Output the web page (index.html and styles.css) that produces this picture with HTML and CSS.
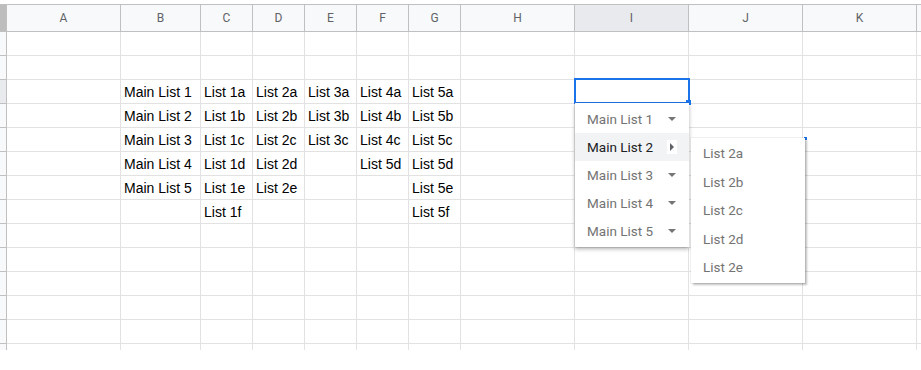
FILE: index.html
```html
<!DOCTYPE html>
<html lang="en">
<head>
  <meta charset="UTF-8" />
  <title>Dependent dropdown</title>
  <link rel="stylesheet" href="styles.css">
</head>
<body>
  <div class="sheet">
    <div class="grid" id="grid"></div>

    <div class="selection"></div>
    <div class="handle"></div>
    <div class="dot"></div>

    <div class="menu">
      <div class="menu-item">Main List 1 <span class="caret-down"></span></div>
      <div class="menu-item active">Main List 2 <span class="caret-box"><span class="caret-right"></span></span></div>
      <div class="menu-item">Main List 3 <span class="caret-down"></span></div>
      <div class="menu-item">Main List 4 <span class="caret-down"></span></div>
      <div class="menu-item">Main List 5 <span class="caret-down"></span></div>
    </div>

    <div class="submenu">
      <div class="sub-item">List 2a</div>
      <div class="sub-item">List 2b</div>
      <div class="sub-item">List 2c</div>
      <div class="sub-item">List 2d</div>
      <div class="sub-item">List 2e</div>
    </div>
  </div>

  <script>
    const grid = document.getElementById('grid');
    const letters = ['A', 'B', 'C', 'D', 'E', 'F', 'G', 'H', 'I', 'J', 'K', ''];
    const totalRows = 14;
    const activeRow = 3;

    // row number -> values for columns A..G
    const data = {
      3: ['', 'Main List 1', 'List 1a', 'List 2a', 'List 3a', 'List 4a', 'List 5a'],
      4: ['', 'Main List 2', 'List 1b', 'List 2b', 'List 3b', 'List 4b', 'List 5b'],
      5: ['', 'Main List 3', 'List 1c', 'List 2c', 'List 3c', 'List 4c', 'List 5c'],
      6: ['', 'Main List 4', 'List 1d', 'List 2d', '', 'List 5d', 'List 5d'],
      7: ['', 'Main List 5', 'List 1e', 'List 2e', '', '', 'List 5e'],
      8: ['', '', 'List 1f', '', '', '', 'List 5f']
    };

    function addCell(cls, text) {
      const el = document.createElement('div');
      el.className = cls;
      el.textContent = text || '';
      grid.appendChild(el);
    }

    addCell('cell corner');
    letters.forEach(letter => {
      addCell(letter === 'I' ? 'cell col-head active-head' : 'cell col-head', letter);
    });

    for (let r = 1; r <= totalRows; r++) {
      addCell(r === activeRow ? 'cell row-head active-head' : 'cell row-head');
      const values = data[r] || [];
      letters.forEach((letter, i) => addCell('cell', values[i]));
    }
  </script>
</body>
</html>
```

FILE: styles.css
```css
body {
  margin: 0;
  background: #fff;
  font-family: "Liberation Sans", Arial, sans-serif;
}

.sheet {
  position: relative;
  width: 921px;
  height: 350px;
  padding-top: 4px;
  box-sizing: border-box;
  overflow: hidden;
}

.grid {
  display: grid;
  grid-template-columns: 7px 114px 80px repeat(5, 52px) repeat(5, 114px);
  grid-template-rows: 28px;
  grid-auto-rows: 24px;
}

.cell {
  box-sizing: border-box;
  border-right: 1px solid #e2e2e3;
  border-bottom: 1px solid #e2e2e3;
  padding-left: 3px;
  font-size: 14px;
  line-height: 24px;
  color: #000;
  white-space: nowrap;
  overflow: hidden;
}

.col-head {
  padding: 0;
  background: #f8f9fa;
  border-top: 1px solid #c0c0c0;
  border-right-color: #c0c0c0;
  border-bottom-color: #c0c0c0;
  font-family: Roboto, "Liberation Sans", sans-serif;
  font-size: 12px;
  line-height: 26px;
  text-align: center;
  color: #5f6368;
}

.row-head {
  padding: 0;
  background: #f8f9fa;
  border-right-color: #c0c0c0;
  border-bottom-color: #c0c0c0;
}

.corner {
  padding: 0;
  background: #bdbdbd;
  border-top: 1px solid #c0c0c0;
  border-right-color: #c0c0c0;
  border-bottom-color: #c0c0c0;
}

.active-head {
  background: #e8eaed;
}

.selection {
  position: absolute;
  left: 574px;
  top: 78px;
  width: 116px;
  height: 26px;
  box-sizing: border-box;
  border: 2px solid #1a73e8;
}

.handle {
  position: absolute;
  left: 686px;
  top: 100px;
  width: 5px;
  height: 5px;
  background: #1a73e8;
}

.dot {
  position: absolute;
  left: 804px;
  top: 137px;
  width: 3px;
  height: 3px;
  background: #1a73e8;
}

.menu,
.submenu {
  position: absolute;
  background: #fff;
  font-family: Roboto, "Liberation Sans", sans-serif;
  font-size: 13.5px;
  color: #737373;
}

.menu {
  left: 575px;
  top: 103px;
  width: 114px;
  padding: 2px 0;
  box-shadow: 0 2px 4px rgba(0, 0, 0, 0.3);
  z-index: 2;
}

.menu-item {
  display: flex;
  align-items: center;
  justify-content: space-between;
  height: 28px;
  padding: 0 13px 0 12px;
}

.menu-item.active {
  background: #f1f3f4;
  color: #202124;
}

.caret-down {
  width: 0;
  height: 0;
  border-left: 4px solid transparent;
  border-right: 4px solid transparent;
  border-top: 4px solid #757575;
}

.caret-box {
  display: flex;
  align-items: center;
  justify-content: center;
  width: 10px;
  height: 14px;
  margin-right: -1px;
  background: #fff;
}

.caret-right {
  width: 0;
  height: 0;
  border-top: 4px solid transparent;
  border-bottom: 4px solid transparent;
  border-left: 4px solid #5f6368;
}

.submenu {
  left: 691px;
  top: 138px;
  width: 114px;
  padding: 1px 0;
  box-shadow: 2px 2px 2px rgba(0, 0, 0, 0.25), 0 0 0 1px rgba(0, 0, 0, 0.06);
  z-index: 3;
}

.sub-item {
  height: 28.5px;
  line-height: 28.5px;
  padding-left: 12px;
}
```
